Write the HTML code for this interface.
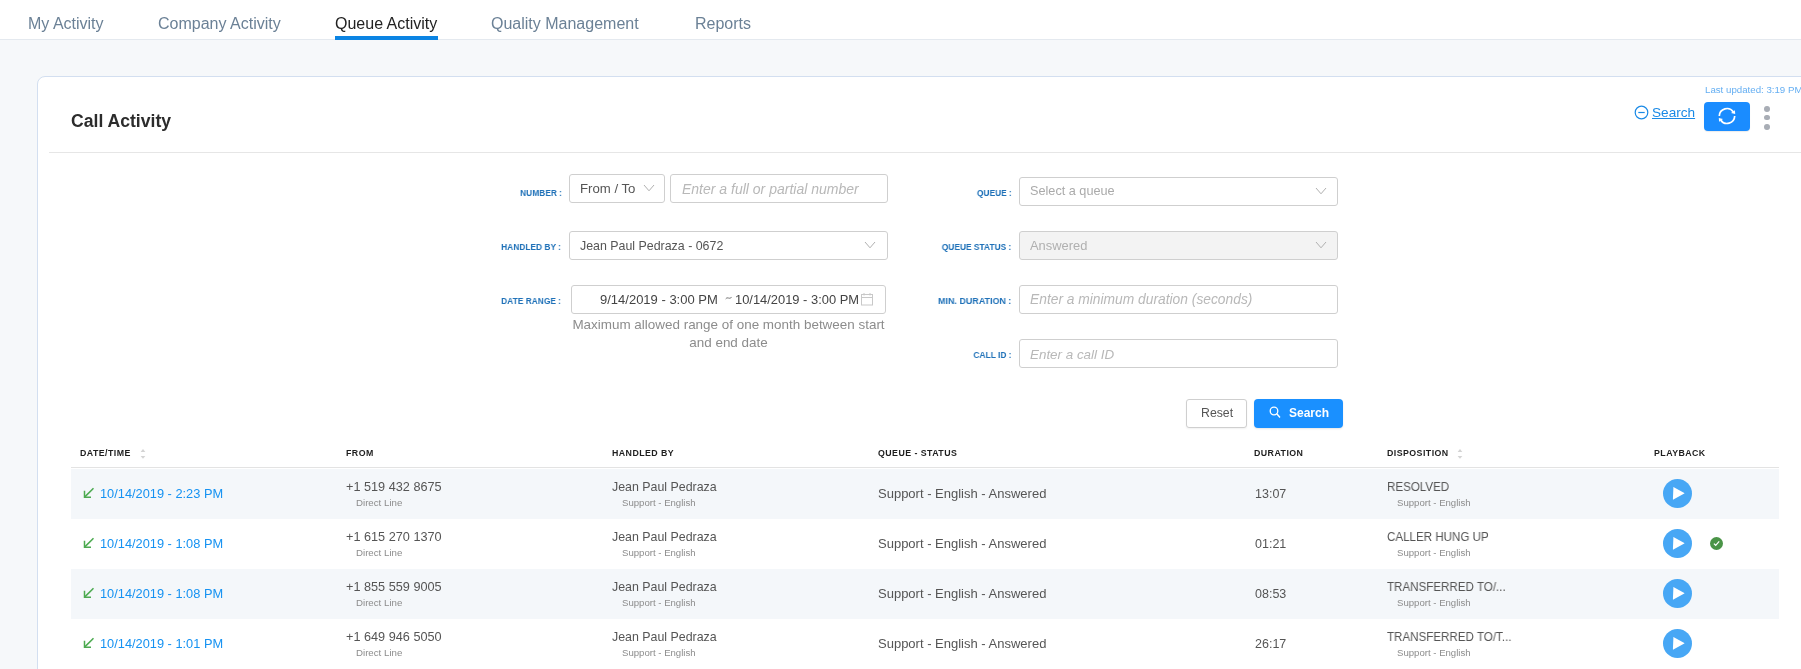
<!DOCTYPE html>
<html><head><meta charset="utf-8"><style>
html,body{margin:0;padding:0;}
body{width:1801px;height:669px;overflow:hidden;position:relative;background:#f6f8fa;font-family:"Liberation Sans",sans-serif;}
.t{position:absolute;white-space:nowrap;line-height:1;will-change:transform;}
.b{position:absolute;}
</style></head><body>
<div class="b" style="left:0px;top:0px;width:1801px;height:39px;background:#fff;"></div>
<div class="b" style="left:0px;top:39px;width:1801px;height:1px;background:#e4e9ef;"></div>
<div class="t" style="left:28px;top:15.65px;font-size:16px;color:#6b8196;">My Activity</div>
<div class="t" style="left:158px;top:15.65px;font-size:16px;color:#6b8196;">Company Activity</div>
<div class="t" style="left:335px;top:15.65px;font-size:16px;color:#222;">Queue Activity</div>
<div class="t" style="left:491px;top:15.65px;font-size:16px;color:#6b8196;">Quality Management</div>
<div class="t" style="left:695px;top:15.65px;font-size:16px;color:#6b8196;">Reports</div>
<div class="b" style="left:335px;top:36px;width:103px;height:4px;background:#0b84e3;"></div>
<div class="b" style="left:37px;top:76px;width:1800px;height:700px;background:#fff;border:1px solid #d3dff0;border-radius:8px;box-sizing:border-box;"></div>
<div class="t" style="left:71px;top:113.30px;font-size:17.6px;color:#2c2c2c;font-weight:700;">Call Activity</div>
<div class="b" style="left:49px;top:152px;width:1760px;height:1px;background:#e6e6e6;"></div>
<div class="t" style="left:1704.5px;top:84.99px;font-size:9.7px;color:#64aef2;">Last updated: 3:19 PM</div>
<svg class="b" style="left:1634px;top:105px" width="15" height="15" viewBox="0 0 15 15"><circle cx="7.5" cy="7.5" r="6.3" fill="none" stroke="#1a8ae6" stroke-width="1.2"/><line x1="4.3" y1="7.5" x2="10.7" y2="7.5" stroke="#1a8ae6" stroke-width="1.2"/></svg>
<div class="t" style="left:1652px;top:106.38px;font-size:13.6px;color:#1a8ae6;text-decoration:underline;text-underline-offset:1px;">Search</div>
<div class="b" style="left:1704px;top:102px;width:46px;height:29px;background:#1a8cff;border-radius:4px;box-shadow:0 1px 1px rgba(0,0,0,0.08);"></div>
<svg class="b" style="left:1716px;top:105px" width="22" height="22" viewBox="0 0 22 22"><path d="M3.3 11 A7.7 7.7 0 0 1 17.4 7.0" fill="none" stroke="#fff" stroke-width="1.7"/><path d="M15 8.1 L18.9 5.2 L19.2 8.9 Z" fill="#fff"/><path d="M18.7 11 A7.7 7.7 0 0 1 4.6 15.0" fill="none" stroke="#fff" stroke-width="1.7"/><path d="M7 13.9 L3.1 16.8 L2.8 13.1 Z" fill="#fff"/></svg>
<div class="b" style="left:1763.9px;top:105.89999999999999px;width:5.8px;height:5.8px;background:#a8adb5;border-radius:50%;"></div>
<div class="b" style="left:1763.9px;top:114.69999999999999px;width:5.8px;height:5.8px;background:#a8adb5;border-radius:50%;"></div>
<div class="b" style="left:1763.9px;top:123.8px;width:5.8px;height:5.8px;background:#a8adb5;border-radius:50%;"></div>
<div class="t" style="right:1239.5px;top:188.00px;font-size:9.8px;font-weight:700;color:#1f71b8;transform:scaleX(0.855);transform-origin:100% 50%;">NUMBER :</div>
<div class="b" style="left:569px;top:174px;width:96px;height:29px;background:#fff;border:1px solid #cfcfcf;border-radius:3px;box-sizing:border-box;"></div>
<div class="t" style="left:580px;top:181.92px;font-size:13.2px;color:#555;">From / To</div>
<svg class="b" style="left:643.1px;top:183.8px" width="12" height="8" viewBox="0 0 12 8"><path d="M1 1 L6 6.8 L11 1" fill="none" stroke="#b0b0b0" stroke-width="1"/></svg>
<div class="b" style="left:670px;top:174px;width:218px;height:29px;background:#fff;border:1px solid #cfcfcf;border-radius:3px;box-sizing:border-box;"></div>
<div class="t" style="left:682px;top:182.05px;font-size:14px;color:#b8b8b8;font-style:italic;">Enter a full or partial number</div>
<div class="t" style="right:1239.5px;top:242.00px;font-size:9.8px;font-weight:700;color:#1f71b8;transform:scaleX(0.855);transform-origin:100% 50%;">HANDLED BY :</div>
<div class="b" style="left:569px;top:231px;width:319px;height:29px;background:#fff;border:1px solid #cfcfcf;border-radius:3px;box-sizing:border-box;"></div>
<div class="t" style="left:579.5px;top:240.40px;font-size:12.4px;color:#555;">Jean Paul Pedraza - 0672</div>
<svg class="b" style="left:864.1px;top:240.8px" width="12" height="8" viewBox="0 0 12 8"><path d="M1 1 L6 6.8 L11 1" fill="none" stroke="#b0b0b0" stroke-width="1"/></svg>
<div class="t" style="right:1239.5px;top:296.00px;font-size:9.8px;font-weight:700;color:#1f71b8;transform:scaleX(0.855);transform-origin:100% 50%;">DATE RANGE :</div>
<div class="b" style="left:571px;top:285px;width:315px;height:29px;background:#fff;border:1px solid #cfcfcf;border-radius:3px;box-sizing:border-box;"></div>
<div class="t" style="left:600px;top:293.09px;font-size:13px;color:#444;">9/14/2019 - 3:00 PM</div>
<svg class="b" style="left:724.5px;top:295.5px" width="8" height="4" viewBox="0 0 8 4"><path d="M0.7 2.9 Q1.8 1.2 3.3 2 Q4.8 2.8 6.6 1.4" fill="none" stroke="#6a6a6a" stroke-width="0.9"/></svg>
<div class="t" style="left:735px;top:294.08px;font-size:12.9px;color:#444;">10/14/2019 - 3:00 PM</div>
<svg class="b" style="left:861px;top:293px" width="13" height="13" viewBox="0 0 13 13"><rect x="0.5" y="1.5" width="11" height="10.5" fill="none" stroke="#c8c8c8" stroke-width="1"/><line x1="0.5" y1="4.5" x2="11.5" y2="4.5" stroke="#c8c8c8"/><line x1="3" y1="0" x2="3" y2="2.5" stroke="#c8c8c8"/><line x1="9" y1="0" x2="9" y2="2.5" stroke="#c8c8c8"/></svg>
<div class="t" style="left:571px;top:316.49px;width:315px;text-align:center;font-size:13.45px;line-height:17.7px;color:#8c8c8c;">Maximum allowed range of one month between start<br>and end date</div>
<div class="t" style="right:789.5px;top:188.00px;font-size:9.8px;font-weight:700;color:#1f71b8;transform:scaleX(0.855);transform-origin:100% 50%;">QUEUE :</div>
<div class="b" style="left:1019px;top:177px;width:319px;height:29px;background:#fff;border:1px solid #cfcfcf;border-radius:3px;box-sizing:border-box;"></div>
<div class="t" style="left:1030px;top:185.15px;font-size:12.7px;color:#aaa;">Select a queue</div>
<svg class="b" style="left:1315.1px;top:186.8px" width="12" height="8" viewBox="0 0 12 8"><path d="M1 1 L6 6.8 L11 1" fill="none" stroke="#b0b0b0" stroke-width="1"/></svg>
<div class="t" style="right:789.5px;top:242.30px;font-size:9.8px;font-weight:700;color:#1f71b8;transform:scaleX(0.855);transform-origin:100% 50%;">QUEUE STATUS :</div>
<div class="b" style="left:1019px;top:231px;width:319px;height:29px;background:#f3f3f3;border:1px solid #cfcfcf;border-radius:3px;box-sizing:border-box;"></div>
<div class="t" style="left:1030px;top:239.98px;font-size:12.9px;color:#b0b0b0;">Answered</div>
<svg class="b" style="left:1315.1px;top:240.8px" width="12" height="8" viewBox="0 0 12 8"><path d="M1 1 L6 6.8 L11 1" fill="none" stroke="#b0b0b0" stroke-width="1"/></svg>
<div class="t" style="right:789.5px;top:296.00px;font-size:9.8px;font-weight:700;color:#1f71b8;transform:scaleX(0.913);transform-origin:100% 50%;">MIN. DURATION :</div>
<div class="b" style="left:1019px;top:285px;width:319px;height:29px;background:#fff;border:1px solid #cfcfcf;border-radius:3px;box-sizing:border-box;"></div>
<div class="t" style="left:1030px;top:293.22px;font-size:13.8px;color:#b8b8b8;font-style:italic;">Enter a minimum duration (seconds)</div>
<div class="t" style="right:789.5px;top:350.00px;font-size:9.8px;font-weight:700;color:#1f71b8;transform:scaleX(0.855);transform-origin:100% 50%;">CALL ID :</div>
<div class="b" style="left:1019px;top:339px;width:319px;height:29px;background:#fff;border:1px solid #cfcfcf;border-radius:3px;box-sizing:border-box;"></div>
<div class="t" style="left:1030px;top:347.55px;font-size:13.4px;color:#b8b8b8;font-style:italic;">Enter a call ID</div>
<div class="b" style="left:1186px;top:399px;width:61px;height:29px;background:#fff;border:1px solid #cfcfcf;border-radius:3px;box-sizing:border-box;box-shadow:0 1px 2px rgba(0,0,0,0.06);"></div>
<div class="t" style="left:1200.5px;top:407.49px;font-size:12.3px;color:#555;">Reset</div>
<div class="b" style="left:1254px;top:399px;width:89px;height:29px;background:#1a90ff;border-radius:4px;box-shadow:0 1px 2px rgba(0,0,0,0.1);"></div>
<svg class="b" style="left:1269px;top:406px" width="13" height="13" viewBox="0 0 13 13"><circle cx="5" cy="5" r="3.8" fill="none" stroke="#fff" stroke-width="1.3"/><line x1="7.8" y1="7.8" x2="11" y2="11.5" stroke="#fff" stroke-width="1.4"/></svg>
<div class="t" style="left:1288.5px;top:406.94px;font-size:12px;color:#fff;font-weight:700;">Search</div>
<div class="t" style="left:80px;top:448.85px;font-size:8.8px;color:#1e1e1e;font-weight:700;letter-spacing:0.45px;">DATE/TIME</div>
<div class="t" style="left:346px;top:448.85px;font-size:8.8px;color:#1e1e1e;font-weight:700;letter-spacing:0.45px;">FROM</div>
<div class="t" style="left:612px;top:448.85px;font-size:8.8px;color:#1e1e1e;font-weight:700;letter-spacing:0.45px;">HANDLED BY</div>
<div class="t" style="left:878px;top:448.85px;font-size:8.8px;color:#1e1e1e;font-weight:700;letter-spacing:0.45px;">QUEUE - STATUS</div>
<div class="t" style="left:1254px;top:448.85px;font-size:8.8px;color:#1e1e1e;font-weight:700;letter-spacing:0.45px;">DURATION</div>
<div class="t" style="left:1387px;top:448.85px;font-size:8.8px;color:#1e1e1e;font-weight:700;letter-spacing:0.45px;">DISPOSITION</div>
<div class="t" style="left:1654px;top:448.85px;font-size:8.8px;color:#1e1e1e;font-weight:700;letter-spacing:0.45px;">PLAYBACK</div>
<svg class="b" style="left:139.5px;top:448px" width="6" height="12" viewBox="0 0 6 12"><path d="M0.6 3.9 L3 1.0 L5.4 3.9 Z" fill="#d4d4d4"/><path d="M0.6 7.9 L3 10.8 L5.4 7.9 Z" fill="#d4d4d4"/></svg>
<svg class="b" style="left:1456.8px;top:448px" width="6" height="12" viewBox="0 0 6 12"><path d="M0.6 3.9 L3 1.0 L5.4 3.9 Z" fill="#d4d4d4"/><path d="M0.6 7.9 L3 10.8 L5.4 7.9 Z" fill="#d4d4d4"/></svg>
<div class="b" style="left:71px;top:467px;width:1708px;height:1px;background:#e3e3e3;"></div>
<div class="b" style="left:71px;top:469px;width:1708px;height:50px;background:#f4f7fa;"></div>
<svg class="b" style="left:83px;top:487px" width="12" height="12" viewBox="0 0 12 12"><path d="M10.5 1.2 L1.8 9.9" stroke="#4caa50" stroke-width="1.5" fill="none"/><path d="M1.5 3.8 L1.5 10.3 L8 10.3" stroke="#4caa50" stroke-width="1.5" fill="none"/></svg>
<div class="t" style="left:100px;top:488.36px;font-size:12.8px;color:#1592f2;">10/14/2019 - 2:23 PM</div>
<div class="t" style="left:346px;top:481.15px;font-size:12.7px;color:#555;">+1 519 432 8675</div>
<div class="t" style="left:355.5px;top:498.09px;font-size:9.7px;color:#8c8c8c;">Direct Line</div>
<div class="t" style="left:611.5px;top:481.40px;font-size:12.4px;color:#555;">Jean Paul Pedraza</div>
<div class="t" style="left:621.5px;top:498.17px;font-size:9.6px;color:#8c8c8c;">Support - English</div>
<div class="t" style="left:878px;top:487.09px;font-size:13px;color:#555;">Support - English - Answered</div>
<div class="t" style="left:1254.5px;top:487.82px;font-size:12.5px;color:#555;">13:07</div>
<div class="t" style="left:1387px;top:481.40px;font-size:12.4px;color:#555;transform:scaleX(0.935);transform-origin:0 50%;">RESOLVED</div>
<div class="t" style="left:1396.5px;top:498.17px;font-size:9.6px;color:#8c8c8c;">Support - English</div>
<svg class="b" style="left:1663px;top:479px" width="29" height="29" viewBox="0 0 29 29"><circle cx="14.5" cy="14.5" r="14.5" fill="#47a7f5"/><path d="M10.4 8.4 Q9.9 7.9 10.4 7.9 L21.3 13.9 Q21.7 14.2 21.3 14.5 L10.4 20.6 Q9.9 20.9 9.9 20.3 Z" fill="#fff"/></svg>
<svg class="b" style="left:83px;top:537px" width="12" height="12" viewBox="0 0 12 12"><path d="M10.5 1.2 L1.8 9.9" stroke="#4caa50" stroke-width="1.5" fill="none"/><path d="M1.5 3.8 L1.5 10.3 L8 10.3" stroke="#4caa50" stroke-width="1.5" fill="none"/></svg>
<div class="t" style="left:100px;top:538.36px;font-size:12.8px;color:#1592f2;">10/14/2019 - 1:08 PM</div>
<div class="t" style="left:346px;top:531.15px;font-size:12.7px;color:#555;">+1 615 270 1370</div>
<div class="t" style="left:355.5px;top:548.09px;font-size:9.7px;color:#8c8c8c;">Direct Line</div>
<div class="t" style="left:611.5px;top:531.40px;font-size:12.4px;color:#555;">Jean Paul Pedraza</div>
<div class="t" style="left:621.5px;top:548.17px;font-size:9.6px;color:#8c8c8c;">Support - English</div>
<div class="t" style="left:878px;top:537.09px;font-size:13px;color:#555;">Support - English - Answered</div>
<div class="t" style="left:1254.5px;top:537.82px;font-size:12.5px;color:#555;">01:21</div>
<div class="t" style="left:1387px;top:531.40px;font-size:12.4px;color:#555;transform:scaleX(0.935);transform-origin:0 50%;">CALLER HUNG UP</div>
<div class="t" style="left:1396.5px;top:548.17px;font-size:9.6px;color:#8c8c8c;">Support - English</div>
<svg class="b" style="left:1663px;top:529px" width="29" height="29" viewBox="0 0 29 29"><circle cx="14.5" cy="14.5" r="14.5" fill="#47a7f5"/><path d="M10.4 8.4 Q9.9 7.9 10.4 7.9 L21.3 13.9 Q21.7 14.2 21.3 14.5 L10.4 20.6 Q9.9 20.9 9.9 20.3 Z" fill="#fff"/></svg>
<svg class="b" style="left:1710px;top:536.5px" width="13" height="13" viewBox="0 0 13 13"><circle cx="6.5" cy="6.5" r="6.5" fill="#4a9447"/><path d="M3.9 6.6 L5.7 8.3 L9.2 4.4" fill="none" stroke="#fff" stroke-width="1.2"/></svg>
<div class="b" style="left:71px;top:569px;width:1708px;height:50px;background:#f4f7fa;"></div>
<svg class="b" style="left:83px;top:587px" width="12" height="12" viewBox="0 0 12 12"><path d="M10.5 1.2 L1.8 9.9" stroke="#4caa50" stroke-width="1.5" fill="none"/><path d="M1.5 3.8 L1.5 10.3 L8 10.3" stroke="#4caa50" stroke-width="1.5" fill="none"/></svg>
<div class="t" style="left:100px;top:588.36px;font-size:12.8px;color:#1592f2;">10/14/2019 - 1:08 PM</div>
<div class="t" style="left:346px;top:581.15px;font-size:12.7px;color:#555;">+1 855 559 9005</div>
<div class="t" style="left:355.5px;top:598.09px;font-size:9.7px;color:#8c8c8c;">Direct Line</div>
<div class="t" style="left:611.5px;top:581.40px;font-size:12.4px;color:#555;">Jean Paul Pedraza</div>
<div class="t" style="left:621.5px;top:598.17px;font-size:9.6px;color:#8c8c8c;">Support - English</div>
<div class="t" style="left:878px;top:587.09px;font-size:13px;color:#555;">Support - English - Answered</div>
<div class="t" style="left:1254.5px;top:587.82px;font-size:12.5px;color:#555;">08:53</div>
<div class="t" style="left:1387px;top:581.40px;font-size:12.4px;color:#555;transform:scaleX(0.935);transform-origin:0 50%;">TRANSFERRED TO/...</div>
<div class="t" style="left:1396.5px;top:598.17px;font-size:9.6px;color:#8c8c8c;">Support - English</div>
<svg class="b" style="left:1663px;top:579px" width="29" height="29" viewBox="0 0 29 29"><circle cx="14.5" cy="14.5" r="14.5" fill="#47a7f5"/><path d="M10.4 8.4 Q9.9 7.9 10.4 7.9 L21.3 13.9 Q21.7 14.2 21.3 14.5 L10.4 20.6 Q9.9 20.9 9.9 20.3 Z" fill="#fff"/></svg>
<svg class="b" style="left:83px;top:637px" width="12" height="12" viewBox="0 0 12 12"><path d="M10.5 1.2 L1.8 9.9" stroke="#4caa50" stroke-width="1.5" fill="none"/><path d="M1.5 3.8 L1.5 10.3 L8 10.3" stroke="#4caa50" stroke-width="1.5" fill="none"/></svg>
<div class="t" style="left:100px;top:638.36px;font-size:12.8px;color:#1592f2;">10/14/2019 - 1:01 PM</div>
<div class="t" style="left:346px;top:631.15px;font-size:12.7px;color:#555;">+1 649 946 5050</div>
<div class="t" style="left:355.5px;top:648.09px;font-size:9.7px;color:#8c8c8c;">Direct Line</div>
<div class="t" style="left:611.5px;top:631.40px;font-size:12.4px;color:#555;">Jean Paul Pedraza</div>
<div class="t" style="left:621.5px;top:648.17px;font-size:9.6px;color:#8c8c8c;">Support - English</div>
<div class="t" style="left:878px;top:637.09px;font-size:13px;color:#555;">Support - English - Answered</div>
<div class="t" style="left:1254.5px;top:637.82px;font-size:12.5px;color:#555;">26:17</div>
<div class="t" style="left:1387px;top:631.40px;font-size:12.4px;color:#555;transform:scaleX(0.935);transform-origin:0 50%;">TRANSFERRED TO/T...</div>
<div class="t" style="left:1396.5px;top:648.17px;font-size:9.6px;color:#8c8c8c;">Support - English</div>
<svg class="b" style="left:1663px;top:629px" width="29" height="29" viewBox="0 0 29 29"><circle cx="14.5" cy="14.5" r="14.5" fill="#47a7f5"/><path d="M10.4 8.4 Q9.9 7.9 10.4 7.9 L21.3 13.9 Q21.7 14.2 21.3 14.5 L10.4 20.6 Q9.9 20.9 9.9 20.3 Z" fill="#fff"/></svg>
</body></html>
